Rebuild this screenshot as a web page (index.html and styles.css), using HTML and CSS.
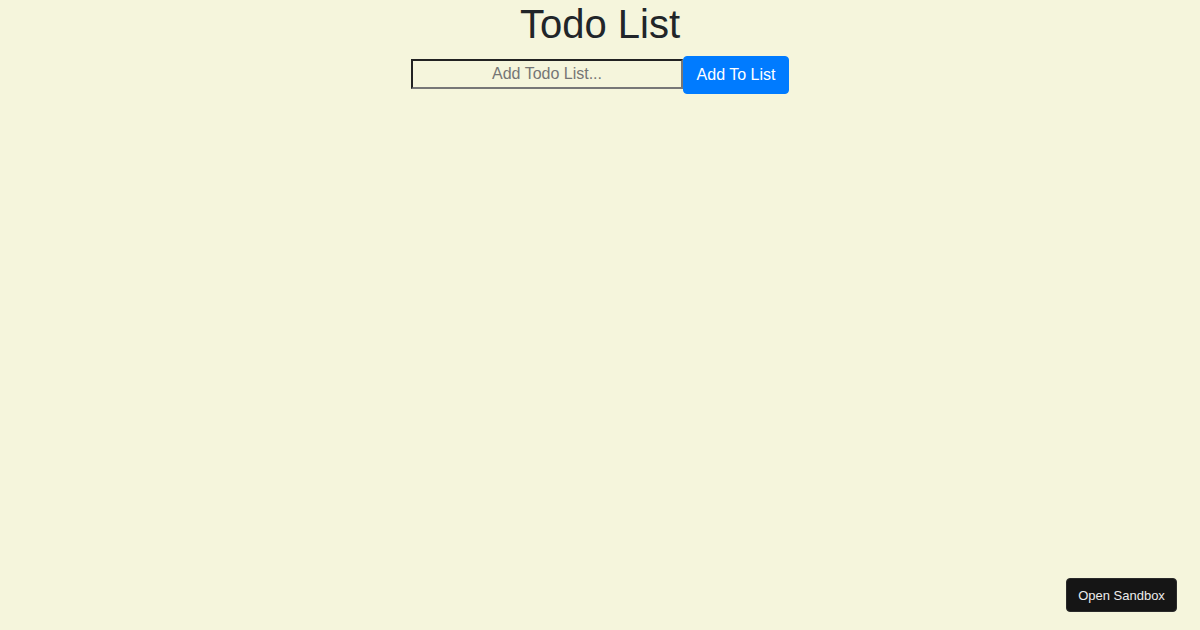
FILE: index.html
```html
<!DOCTYPE html>
<html lang="en">
<head>
<meta charset="utf-8">
<title>Todo List</title>
<link rel="stylesheet" href="styles.css">
</head>
<body>
<main class="app">
  <h1 class="title">Todo List</h1>
  <form class="add-form">
    <input class="todo-input" type="text" placeholder="Add Todo List...">
    <button class="add-btn" type="button">Add To List</button>
  </form>
</main>
<a class="sandbox-btn" href="#">Open Sandbox</a>
</body>
</html>
```

FILE: styles.css
```css
html, body {
  margin: 0;
  padding: 0;
  height: 100%;
}
body {
  background: #f5f5dc;
  font-family: "Liberation Sans", Arial, sans-serif;
  color: #212529;
}
.app {
  text-align: center;
}
.title {
  margin: 0 0 8px;
  font-size: 40px;
  font-weight: 400;
  line-height: 48px;
  color: #212529;
}
.add-form {
  display: flex;
  justify-content: center;
  align-items: flex-start;
  margin: 0;
}
.todo-input {
  box-sizing: border-box;
  width: 272px;
  height: 30px;
  margin: 3px 0 0;
  padding: 1px 2px;
  border: 2px solid;
  border-color: #222 #777 #777 #222;
  background: transparent;
  font-family: "Liberation Sans", Arial, sans-serif;
  font-size: 16px;
  text-align: center;
  color: #212529;
  outline: none;
}
.todo-input::placeholder {
  color: #757575;
}
.add-btn {
  box-sizing: border-box;
  width: 106px;
  height: 38px;
  padding: 0;
  border: 1px solid #007bff;
  border-radius: 4px;
  background: #007bff;
  color: #fff;
  font-family: "Liberation Sans", Arial, sans-serif;
  font-size: 16px;
  line-height: 24px;
  cursor: pointer;
}
.sandbox-btn {
  position: fixed;
  right: 23px;
  bottom: 18px;
  box-sizing: border-box;
  width: 111px;
  height: 34px;
  display: flex;
  align-items: center;
  justify-content: center;
  background: #151515;
  border: 1px solid #2a2a2a;
  border-radius: 4px;
  color: #ececec;
  font-family: "Liberation Sans", Arial, sans-serif;
  font-size: 13px;
  text-decoration: none;
}
```
